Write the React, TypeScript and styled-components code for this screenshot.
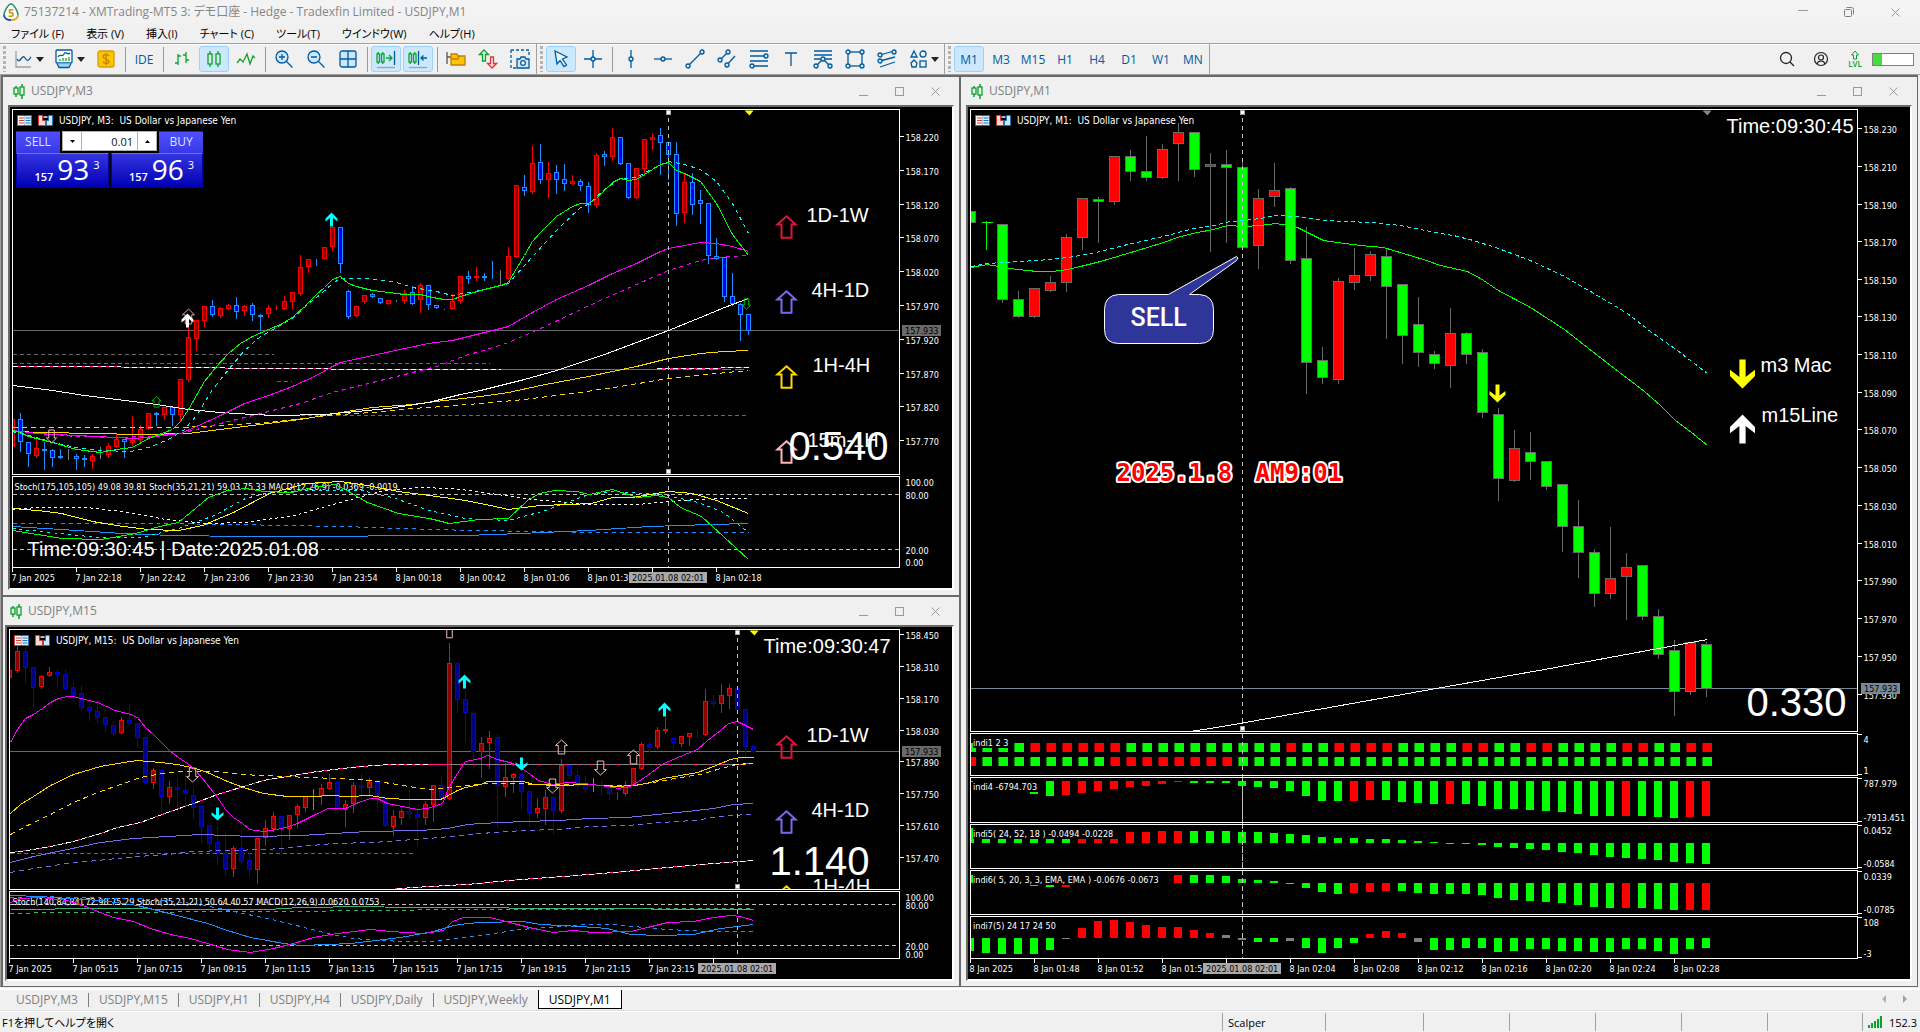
import React from "react";
import styled, { createGlobalStyle, css } from "styled-components";

const UI_FONT = `"Open Sans", "Noto Sans CJK JP", sans-serif`;
const AXIS_FONT = `"DejaVu Sans Condensed", "DejaVu Sans", sans-serif`;
const LABEL_FONT = `"Liberation Sans", Arial, sans-serif`;
const MONO_FONT = `"DejaVu Sans Mono", monospace`;

const GlobalStyle = createGlobalStyle`
  *, *::before, *::after { box-sizing: border-box; }
  body { margin: 0; background: #f0f0f0; font-family: ${UI_FONT}; font-size: 11px; color: #000; }
  button, input { font: inherit; color: inherit; }
`;

/* ---------- shell ---------- */

const Shell = styled.div`
  display: flex;
  flex-direction: column;
  min-height: 100vh;
`;

const TitleBar = styled.header`
  display: flex;
  align-items: center;
  height: 23px;
  padding: 0 2px 0 3px;
  background: #f3f3f3;
  color: #858585;
`;

const AppTitle = styled.h1`
  flex: 1;
  margin: 0 0 0 5px;
  font-size: 12px;
  font-weight: 400;
  line-height: 22px;
  white-space: nowrap;
  font-feature-settings: "palt";
`;

const PlainButton = styled.button`
  display: flex;
  align-items: center;
  justify-content: center;
  margin: 0;
  padding: 0;
  border: 0;
  background: none;
`;

const FrameButton = styled(PlainButton)`
  width: 46px;
  height: 20px;
`;

const MenuBar = styled.nav`
  display: flex;
  align-items: center;
  height: 20px;
`;

const MenuButton = styled(PlainButton)`
  height: 20px;
  padding: 0 11px 1px;
  font-size: 11px;
  white-space: nowrap;
  font-feature-settings: "palt";
`;

const ToolBar = styled.div`
  display: flex;
  align-items: center;
  height: 32px;
  border-top: 1px solid #a0a0a0;
  border-bottom: 1px solid #a0a0a0;
  box-shadow: inset 0 1px #fff;
`;

const ToolGroup = styled.div`
  display: flex;
  align-items: center;
  gap: 2px;
  height: 30px;
  padding-right: 1px;
  border-right: 1px solid #a0a0a0;
`;

const Grip = styled.i`
  width: 3px;
  height: 26px;
  margin: 0 1px 0 3px;
  background: repeating-linear-gradient(#b4b4b4 0 3px, transparent 3px 5px);
`;

const ToolButton = styled(PlainButton)<{ $on?: boolean; $wide?: boolean }>`
  width: ${(p) => (p.$wide ? 39 : 30)}px;
  height: 26px;
  gap: 4px;
  border: 1px solid transparent;
  border-radius: 3px;
  color: #005a9e;
  font-size: 12px;
  ${(p) =>
    p.$on &&
    css`
      background: #cce8ff;
      border-color: #99d1ff;
    `}
`;

const Divider = styled.i`
  width: 1px;
  height: 25px;
  margin: 0 1px 0 2px;
  background: #9a9a9a;
`;

const Caret = styled.i`
  border: 4px solid transparent;
  border-top: 5px solid #222;
  border-bottom: 0;
`;

const ToolEnd = styled.div`
  display: flex;
  align-items: center;
  margin-left: auto;
  padding-right: 6px;
`;

const EndButton = styled(PlainButton)`
  width: 34px;
  height: 26px;
  color: #222;
`;

const LevelMeter = styled.div`
  width: 42px;
  height: 13px;
  border: 1px solid #808080;
  background: linear-gradient(90deg, #44dd44 9px, #fff 9px);
`;

/* ---------- chart windows ---------- */

const Workspace = styled.main`
  display: grid;
  grid-template-columns: minmax(0, 1fr) minmax(0, 1fr);
  margin-right: 2px;
  border: 1px solid #696969;
  border-top: 0;
  border-left-color: #a0a0a0;
`;

const Column = styled.div`
  display: flex;
  flex-direction: column;
`;

const ChildFrame = styled.section<{ $left: number }>`
  padding: 0 5px 5px ${(p) => p.$left}px;
  border-top: 2px solid #696969;
  border-left: 2px solid #696969;
`;

const Caption = styled.div`
  display: flex;
  align-items: center;
  height: 28px;
  padding: 0 1px 0 5px;
  color: #808080;
`;

const CaptionTitle = styled.h2`
  flex: 1;
  margin: 0 0 0 6px;
  font-size: 12px;
  font-weight: 400;
  line-height: 26px;
`;

const CaptionButton = styled(PlainButton)`
  width: 36px;
  height: 28px;
`;

const Sunken = styled.div`
  position: relative;
  border-style: solid;
  border-width: 2px;
  border-color: #696969 #fff #fff #696969;
  background: #000;
`;

const Plot = styled.svg`
  display: block;
  width: 100%;
  font-family: ${AXIS_FONT};
  font-size: 9px;
  fill: #fff;
`;

const Symbol = styled.div`
  position: absolute;
  top: 7px;
  left: 7px;
  display: flex;
  align-items: center;
  gap: 6px;
  color: #fff;
  font-family: ${AXIS_FONT};
  font-size: 10px;
  line-height: 13px;
  white-space: pre;
`;

const TradePanel = styled.form`
  position: absolute;
  top: 24px;
  left: 6px;
  display: grid;
  grid-template-columns: 93px 92px;
  column-gap: 2px;
  width: 187px;
`;

const TradeTop = styled.div`
  display: flex;
  grid-column: 1 / -1;
  justify-content: space-between;
  height: 22px;
`;

const SideButton = styled(PlainButton)`
  width: 44px;
  height: 22px;
  padding-bottom: 2px;
  background: linear-gradient(#5050ff, #3838e4);
  color: #dfe3ff;
  font-size: 12px;
  box-shadow: inset 0 1px #2020b8;
`;

const LotBox = styled.div`
  display: flex;
  gap: 1px;
  height: 20px;
  padding: 1px;
  background: #b0b0b0;
`;

const Spin = styled(PlainButton)`
  width: 18px;
  background: #fff;
`;

const LotInput = styled.input`
  width: 55px;
  padding: 0 4px;
  border: 0;
  background: #fff;
  color: #111;
  text-align: right;
`;

const PriceButton = styled(PlainButton)`
  align-items: flex-end;
  gap: 4px;
  height: 35px;
  padding: 0 0 3px 9px;
  background: linear-gradient(#3434e0, #0000b4);
  border: 1px solid #0000a8;
  border-top-color: #6a6aff;
  color: #fff;
  line-height: 1;
`;

const PriceSmall = styled.span`
  font-size: 11px;
  font-weight: 600;
  line-height: 15px;
`;

const PriceBig = styled.span`
  font-size: 28px;
  line-height: 30px;
`;

const PriceTick = styled.span`
  align-self: flex-start;
  margin-top: 5px;
  font-size: 11px;
`;

/* ---------- bottom bars ---------- */

const TabBar = styled.div`
  display: flex;
  align-items: flex-start;
  height: 22px;
  margin-top: 1px;
  padding-left: 6px;
  border-top: 2px solid #000;
  border-image: linear-gradient(#fff 50%, #000 50%) 2;
  border-bottom: 0;
`;

const Tab = styled(PlainButton)<{ $active?: boolean }>`
  height: 19px;
  padding: 0 10px;
  color: #808080;
  font-size: 12px;
  ${(p) =>
    p.$active &&
    css`
      background: #fff;
      color: #000;
      border: 1px solid #000;
      border-top: 0;
    `}
`;

const TabRule = styled.i`
  width: 1px;
  height: 14px;
  margin-top: 3px;
  background: #808080;
`;

const TabScroll = styled.div`
  display: flex;
  gap: 14px;
  margin: 3px 11px 0 auto;
`;

const ScrollButton = styled(PlainButton)`
  width: 7px;
  height: 12px;
`;

const StatusBar = styled.footer`
  display: flex;
  align-items: center;
  height: 23px;
  border-top: 1px solid #e0e0e0;
  box-shadow: inset 0 1px #fff;
`;

const StatusHint = styled.p`
  flex: 1;
  margin: 0;
  padding-left: 2px;
  font-size: 11px;
  font-feature-settings: "palt";
`;

const StatusCell = styled.div<{ $w: number }>`
  display: flex;
  align-items: center;
  gap: 6px;
  width: ${(p) => p.$w}px;
  height: 18px;
  padding-left: 5px;
  border-left: 1px solid #a0a0a0;
  font-size: 11px;
`;

/* ---------- icons ---------- */

const Ico = ({ children, w = 20 }: { children: React.ReactNode; w?: number }) => (
  <svg width={w} height="20" viewBox={`0 0 ${w} 20`} fill="none" stroke="#005a9e" strokeWidth="1.3" aria-hidden="true">
    {children}
  </svg>
);
const GREEN = "#0aa32a";
const dot = (x: number, y: number) => <circle cx={x} cy={y} r="2" fill="#cce8ff" />;

const icons: Record<string, React.ReactNode> = {
  line: <Ico w={18}><path d="M2 2v16h15" stroke="#a0a0a0" /><path d="M3 10c3 6 5-6 8-1s4 1 6-1" /></Ico>,
  template: <Ico w={18}><rect x="1" y="1" width="16" height="13" rx="1" fill="#fff" /><path d="M2 14.500l2 4h10l2-4" fill="#9fd3f5" /><path d="M3 8c2-4 4 1 6-3s3 2 6-1" /><path d="M5 12v-2M8 12V9M11 12V9M14 12V8" stroke={GREEN} /></Ico>,
  dollar: <Ico><rect x="2" y="2" width="16" height="16" rx="2" fill="#fdc500" stroke="#d99b00" /><path d="M13 7c-1-2-6-2-6 .6S13 10 13 12.500s-5 2.500-6.200 0M10 4v12" stroke="#c47f00" /></Ico>,
  bars: <Ico><path d="M6 5v11M6 7h3M3 14h3M14 3v11M14 11h3M11 6h3" stroke={GREEN} /></Ico>,
  candles: <Ico><rect x="4" y="5" width="4" height="10" stroke={GREEN} fill="#dff5e3" /><rect x="12" y="5" width="4" height="10" stroke={GREEN} fill="#dff5e3" /><path d="M6 2v3M6 15v3M14 2v3M14 15v3" stroke={GREEN} /></Ico>,
  zig: <Ico><path d="M1 14l3-4 3 3 4-8 3 10 3-8 2 2" stroke={GREEN} /></Ico>,
  zoomIn: <Ico><circle cx="8" cy="8" r="6" fill="#cce8ff" /><path d="M12.500 12.500l6 6M5 8h6M8 5v6" /></Ico>,
  zoomOut: <Ico><circle cx="8" cy="8" r="6" fill="#cce8ff" /><path d="M12.500 12.500l6 6M5 8h6" /></Ico>,
  tile: <Ico><rect x="2" y="2" width="16" height="16" rx="2" fill="#cce8ff" /><path d="M10 2v16M2 10h16" /></Ico>,
  shift: <Ico><rect x="1" y="5" width="2.500" height="8" stroke={GREEN} /><rect x="5.500" y="5" width="2.500" height="8" stroke={GREEN} /><path d="M2.200 3v2M6.700 3v2M2.200 13v2M6.700 13v2M10 9h6M13 6l3 3-3 3" stroke={GREEN} /><path d="M18.500 2v14" /><path d="M1 18.500h18" stroke="#a0a0a0" /></Ico>,
  scroll: <Ico><rect x="1" y="5" width="2.500" height="8" stroke={GREEN} /><rect x="5.500" y="5" width="2.500" height="8" stroke={GREEN} /><path d="M2.200 3v2M6.700 3v2M2.200 13v2M6.700 13v2" stroke={GREEN} /><path d="M10.500 2v14M19 9h-6M15.500 6.500L13 9l2.500 2.500" /><path d="M1 18.500h18" stroke="#a0a0a0" /></Ico>,
  folder: <Ico><path d="M1 3v12M1 8h4" stroke="#555" /><path d="M5 5h6l1 2h7v9H5z" fill="#fdc500" stroke="#c47f00" /><path d="M5 10h7l1-3" stroke="#c47f00" /></Ico>,
  trade: <Ico><path d="M6 1l4.500 4.500H7.500V12H4.500V5.500H1.500z" stroke={GREEN} fill="#dff5e3" /><path d="M14 19l-4.500-4.500H12.500V8h3v6.500H18.500z" stroke="#d83b3b" fill="#fbdada" /></Ico>,
  camera: <Ico><path d="M1 1h18v7M1 1v18h5" strokeDasharray="3 2" /><path d="M7 10h3l1-2h4l1 2h3v9H7z" fill="#cce8ff" /><circle cx="13" cy="14" r="2.300" fill="#fff" /></Ico>,
  cursor: <Ico><path d="M4 2l12 6-4.500 2 4 6-2.500 1.500-4-6-3 3.500z" fill="#e8f5ff" /></Ico>,
  cross: <Ico><path d="M10 1v18M1 10h18" />{dot(10, 10)}</Ico>,
  vline: <Ico><path d="M10 1v18" />{dot(10, 10)}</Ico>,
  hline: <Ico><path d="M1 10h18" />{dot(10, 10)}</Ico>,
  trend: <Ico><path d="M2 18L18 2" />{dot(3, 17)}{dot(17, 3)}</Ico>,
  channel: <Ico><path d="M2 12L12 2M9 17L18 7" />{dot(3, 11)}{dot(11, 3)}{dot(10, 16)}</Ico>,
  fibo: <Ico><path d="M1 2h18M1 7h18M1 12h18M1 17h18" />{dot(17, 7)}{dot(3, 17)}</Ico>,
  text: <Ico><path d="M4 4h12M10 4v13" /></Ico>,
  fan: <Ico><path d="M1 2h18M1 6h18M1 10h7M12 10h7M2 18l8-8 8 8" />{dot(10, 10)}{dot(3, 17)}{dot(17, 17)}</Ico>,
  rect: <Ico><rect x="3" y="3" width="14" height="14" />{dot(3, 3)}{dot(17, 3)}{dot(3, 17)}{dot(17, 17)}</Ico>,
  pitch: <Ico><path d="M3 6l14-4M3 12l15-4M3 18l15-5" />{dot(3, 6)}{dot(17, 3)}{dot(3, 12)}</Ico>,
  shapes: <Ico w={18}><path d="M5 2l3 6H2z" /><circle cx="14" cy="5" r="3" /><path d="M5 11l3 3-1 4H3l-1-4z" /><rect x="11" y="12" width="6" height="6" /></Ico>,
};

const WinCandle = () => (
  <svg width="12" height="15" viewBox="0 0 12 15" fill="none" stroke={GREEN} aria-hidden="true">
    <path d="M3 2v2M3 10v3M9 0v3M9 11v4" strokeWidth="1.500" />
    <rect x="1" y="4" width="4" height="6" strokeWidth="1.300" />
    <rect x="7" y="3" width="4" height="8" strokeWidth="1.300" />
  </svg>
);

const MinIcon = ({ low = false }) => (
  <svg width="12" height="12" stroke="#9a9a9a" aria-hidden="true"><path d={low ? "M2 10.500h9" : "M1 4.500h10"} /></svg>
);
const MaxIcon = () => (
  <svg width="12" height="12" stroke="#9a9a9a" fill="none" aria-hidden="true"><rect x="2.500" y="2.500" width="8" height="8" /></svg>
);
const RestoreIcon = () => (
  <svg width="12" height="12" stroke="#808080" fill="none" aria-hidden="true"><rect x="1.500" y="3.500" width="7" height="7" rx="1" /><path d="M3.500 1.500h5q2 0 2 2v5" /></svg>
);
const CloseIcon = () => (
  <svg width="12" height="12" stroke="#9a9a9a" aria-hidden="true"><path d="M2.500 2.500l8 8M10.500 2.500l-8 8" /></svg>
);

const BookIcons = () => (
  <>
    <svg width="15" height="11" viewBox="0 0 15 11" aria-hidden="true">
      <path d="M0 0h7.500v11H0z" fill="#d93a30" /><path d="M7.500 0H15v11H7.500z" fill="#1675b8" />
      <path d="M1 1h6.500v9H1z" fill="#fff" /><path d="M7.500 1H14v9H7.500z" fill="#dcefff" />
      <path d="M2 3h5M2 5.500h5M2 8h5" stroke="#d93a30" /><path d="M8.500 3h5M8.500 5.500h5M8.500 8h5" stroke="#1675b8" />
    </svg>
    <svg width="15" height="11" viewBox="0 0 15 11" aria-hidden="true">
      <path d="M.5.5h4v5h3v5h-7z" fill="#ffd9d6" stroke="#d93a30" /><path d="M14.500.5h-4v5h-2v5h6z" fill="#cfe8ff" stroke="#1675b8" />
      <path d="M5.500 1h4v2h-4z" fill="#bbb" />
    </svg>
  </>
);

/* ---------- chart primitives ---------- */

type Tone = "r" | "b" | "g";
type Candle = [number, number, number, number, Tone];
type Palette = Record<Tone, { line: string; body: string }>;

function Candles({ data, x0, step, half, palette }: { data: Candle[]; x0: number; step: number; half: number; palette: Palette }) {
  return (
    <g shapeRendering="crispEdges">
      {data.map(([hi, top, bot, lo, tone], i) => {
        const x = x0 + i * step;
        const c = palette[tone];
        return (
          <g key={i} stroke={c.line} fill={c.body}>
            <path d={`M${x} ${hi}V${lo}`} />
            <rect x={x - half} y={top} width={half * 2} height={Math.max(bot - top - 1, 0)} />
          </g>
        );
      })}
    </g>
  );
}

const Curve = ({ c, d, dash }: { c: string; d: string; dash?: string }) => (
  <polyline points={d} fill="none" stroke={c} strokeDasharray={dash} shapeRendering="crispEdges" />
);
const Duo = ({ d }: { d: string }) => (
  <>
    <Curve c="#ff1493" d={d} />
    <Curve c="#fff" d={d} dash="5 3" />
  </>
);
const HRule = ({ x1, x2, y, c = "#696969", dash }: { x1: number; x2: number; y: number; c?: string; dash?: string }) => (
  <path d={`M${x1} ${y}H${x2}`} stroke={c} strokeDasharray={dash} shapeRendering="crispEdges" />
);
const Pane = ({ x, y, w, h }: { x: number; y: number; w: number; h: number }) => (
  <rect x={x} y={y} width={w} height={h} fill="none" stroke="#fff" shapeRendering="crispEdges" />
);

const SHAPES = {
  solid: "M12 0L24 12V18L15 11V28H9V11L0 18V12Z",
  outline: "M12 1L23 11H18V27H6V11H1Z",
};
function Arrow({ x, y, w, h, c, kind = "solid", down }: { x: number; y: number; w: number; h: number; c: string; kind?: keyof typeof SHAPES; down?: boolean }) {
  return (
    <svg x={x - w / 2} y={y} width={w} height={h} viewBox="0 0 24 28" preserveAspectRatio="none" overflow="visible">
      <path
        d={SHAPES[kind]}
        transform={down ? "matrix(1 0 0 -1 0 28)" : undefined}
        fill={kind === "solid" ? c : "none"}
        stroke={kind === "solid" ? "none" : c}
        strokeWidth={w > 14 ? 2 : 1}
        vectorEffect="non-scaling-stroke"
      />
    </svg>
  );
}

function CrossLine({ x, top, bottom, end }: { x: number; top: number; bottom: number; end: number }) {
  return (
    <g shapeRendering="crispEdges">
      <path d={`M${x} ${top}V${end}`} stroke="#c0c0c0" strokeDasharray="4 4" />
      <rect x={x - 2} y={top + 1} width="4" height="4" fill="#fff" stroke="#a0a0a0" />
      <rect x={x - 2} y={bottom - 5} width="4" height="4" fill="#fff" stroke="#a0a0a0" />
    </g>
  );
}

function PriceAxis({ x, ys, first, step, digits = 3 }: { x: number; ys: number[]; first: number; step: number; digits?: number }) {
  return (
    <>
      {ys.map((y, i) => (
        <g key={y}>
          <path d={`M${x} ${y}h4`} stroke="#fff" shapeRendering="crispEdges" />
          <text x={x + 6} y={y + 4}>{(first - i * step).toFixed(digits)}</text>
        </g>
      ))}
    </>
  );
}
const Scale = ({ x, items }: { x: number; items: [number, string][] }) => (
  <>{items.map(([y, t]) => <text key={y} x={x} y={y + 4}>{t}</text>)}</>
);
const Badge = ({ x, y, w, c, children }: { x: number; y: number; w: number; c: string; children: string }) => (
  <>
    <rect x={x} y={y} width={w} height="11" fill={c} />
    <text x={x + 3} y={y + 9} fill="#000">{children}</text>
  </>
);
function TimeAxis({ x, y, labels }: { x: number; y: number; labels: string[] }) {
  return (
    <>
      {labels.map((t, i) => (
        <g key={i}>
          <path d={`M${x + i * 64} ${y}v4`} stroke="#fff" shapeRendering="crispEdges" />
          <text x={x + i * 64 - 1} y={y + 13}>{t}</text>
        </g>
      ))}
    </>
  );
}
const Note = ({ x, y, size = 20, children }: { x: number; y: number; size?: number; children: string }) => (
  <text x={x} y={y} fontFamily={LABEL_FONT} fontSize={size}>{children}</text>
);

/* ---------- M3 ---------- */

const m3: Candle[] = [
  [319,319,347,347,"r"],[312,319,342,351,"b"],[342,342,354,366,"b"],[337,348,356,357,"r"],[341,349,351,369,"b"],[348,350,358,366,"b"],[348,356,358,358,"b"],[348,357,358,359,"g"],
  [353,356,359,369,"b"],[354,358,360,366,"b"],[353,356,361,368,"r"],[346,355,356,358,"g"],[342,346,355,357,"r"],[332,339,347,347,"r"],[338,339,342,357,"b"],[315,340,343,345,"r"],
  [324,329,340,341,"r"],[313,313,329,329,"r"],[311,313,315,325,"b"],[306,307,315,319,"r"],[307,307,315,325,"b"],[278,279,315,321,"r"],[227,237,280,281,"r"],[220,220,239,250,"r"],
  [206,206,221,226,"r"],[199,206,215,216,"b"],[206,208,216,217,"r"],[203,205,209,209,"r"],[196,205,212,218,"b"],[204,206,211,215,"r"],[202,205,215,220,"b"],[213,215,217,230,"b"],
  [204,208,214,217,"r"],[204,208,209,209,"r"],[195,201,209,209,"r"],[191,192,202,208,"r"],[154,167,194,195,"r"],[158,159,167,172,"r"],[158,160,161,165,"b"],[146,147,159,159,"r"],
  [127,127,147,150,"r"],[127,127,164,172,"b"],[189,191,217,218,"b"],[206,206,216,216,"r"],[195,195,202,203,"r"],[192,194,197,197,"b"],[198,198,203,203,"b"],[200,200,204,204,"r"],
  [199,199,200,201,"g"],[189,193,201,203,"r"],[185,192,204,204,"b"],[182,185,200,212,"r"],[185,185,205,209,"b"],[205,205,208,208,"b"],[208,208,209,209,"g"],[193,201,209,209,"r"],
  [175,176,201,203,"r"],[170,176,179,183,"b"],[166,176,178,180,"r"],[172,176,178,180,"b"],[160,177,178,178,"b"],[169,178,179,185,"g"],[146,156,179,179,"r"],[85,85,157,157,"r"],
  [74,87,91,95,"b"],[45,63,92,93,"r"],[43,62,80,83,"b"],[61,73,80,97,"r"],[64,72,80,93,"b"],[63,79,84,90,"b"],[74,81,84,84,"r"],[78,81,86,90,"b"],
  [81,86,105,112,"b"],[52,55,105,107,"r"],[50,54,57,65,"b"],[27,37,57,60,"r"],[37,37,64,64,"b"],[62,63,98,98,"b"],[67,68,98,98,"r"],[39,39,69,75,"r"],
  [32,37,40,49,"r"],[27,35,43,74,"b"],[41,42,55,79,"b"],[41,54,114,125,"b"],[73,82,113,122,"r"],[72,82,105,114,"b"],[89,100,104,123,"b"],[102,103,156,163,"b"],
  [137,156,159,159,"b"],[157,157,197,201,"b"],[172,196,204,205,"b"],[202,204,215,240,"b"],[213,214,231,234,"b"],
];

const bright: Palette = {
  r: { line: "#ff0000", body: "#8b0000" },
  b: { line: "#1e90ff", body: "#0000ff" },
  g: { line: "#808080", body: "#808080" },
};
const deep: Palette = {
  r: { line: "#ff0000", body: "#8b0000" },
  b: { line: "#0000e6", body: "#00008b" },
  g: { line: "#808080", body: "#808080" },
};

function ChartM3() {
  return (
    <Plot height="481" viewBox="10 7 942 481" preserveAspectRatio="xMinYMin meet" role="img" aria-label="USDJPY M3">
      <clipPath id="m3-main"><rect x="12" y="9" width="888" height="366" /></clipPath>
      <g transform="translate(.5 .5)">
        <g clipPath="url(#m3-main)">
          <HRule x1={12} x2={273} y={254} dash="4 3" />
          <HRule x1={12} x2={489} y={263} dash="4 3" />
          <HRule x1={276} x2={291} y={281} dash="4 3" />
          <HRule x1={300} x2={745} y={315} dash="4 3" />
          <HRule x1={12} x2={899} y={230} />
          <Candles data={m3} x0={12} step={8} half={2} palette={bright} />
          <Duo d="12,266 120,266 121,267 224,267 225,268 330,268 331,269 500,269" />
          <Curve c="#ff1493" d="500,269 656,269" />
          <HRule x1={500} x2={745} y={269} c="#8a6878" dash="9 4" />
          <Duo d="656,268 720,268 721,267 748,267" />
          <Curve c="#ffd700" dash="5 4" d="12,327 172,327 204,326 236,324 268,322 300,318 340,314 372,312 412,308 444,306 480,303 524,299 572,293 620,286 668,278 716,273 748,270" />
          <Curve c="#ffd700" d="12,331 44,332 92,333 140,334 188,333 220,329 252,325 300,319 340,312 372,307 412,304 444,300 480,296 508,292 540,285 588,276 636,266 668,258 700,253 724,251 748,250" />
          <Curve c="#fff" d="12,285 52,290 84,295 116,299 156,304 188,309 220,312 252,314 276,315 324,314 356,311 388,308 428,302 460,294 480,290 524,279 556,270 604,254 652,236 668,230 700,217 724,207 748,198" />
          <Curve c="#f0f" dash="4 4" d="12,330 36,333 76,336 116,337 148,336 180,333 204,327 236,319 268,311 300,303 332,292 364,284 404,274 436,266 468,254 480,251 508,242 540,228 572,213 604,198 636,184 668,170 700,160 716,157 748,155" />
          <Curve c="#f0f" d="12,330 36,333 76,335 116,337 132,338 148,337 180,333 196,326 220,315 244,303 268,295 292,286 316,275 332,266 340,262 372,255 404,248 428,243 452,240 480,233 508,226 532,212 556,199 588,185 612,173 636,163 660,151 668,148 684,145 700,142 716,143 732,146 748,151" />
          <Curve c="#0ff" dash="4 4" d="12,331 36,337 52,342 80,348 100,350 130,351 148,347 168,339 184,329 196,315 212,289 228,269 244,250 260,236 276,227 292,218 308,203 320,194 332,183 340,178 364,178 396,182 412,187 436,191 452,195 468,192 480,190 508,183 532,156 556,130 580,107 588,104 604,89 620,78 636,77 652,68 668,61 684,64 700,69 716,81 732,103 748,133" />
          <Curve c="#0f0" d="12,330 20,332 28,336 52,342 76,349 100,352 116,349 132,347 148,338 164,332 172,329 180,321 188,309 196,295 204,281 216,266 228,253 240,243 252,236 268,229 280,224 292,217 304,206 316,194 324,187 332,179 340,176 348,183 356,186 372,190 388,192 404,194 420,194 432,197 444,199 452,199 460,196 480,190 500,185 508,182 516,168 524,155 532,141 540,132 556,116 572,106 580,103 588,103 596,98 612,82 620,78 628,80 636,79 644,74 660,64 668,62 676,70 684,73 700,81 716,103 732,134 748,155" />
          <Arrow x={331} y={112} w={12} h={14} c="#0ff" />
          <Arrow x={188} y={208} w={13} h={16} c="#d8a8a0" kind="outline" />
          <Arrow x={187} y={213} w={12} h={14} c="#fff" />
          <Arrow x={156} y={296} w={10} h={11} c="#00b000" kind="outline" />
          <Arrow x={51} y={329} w={11} h={14} c="#e9bdb6" kind="outline" down />
          <Arrow x={746} y={198} w={9} h={11} c="#00c800" kind="outline" down />
          <Arrow x={786} y={115} w={20} h={23} c="#dc143c" kind="outline" />
          <Arrow x={786} y={190} w={20} h={23} c="#7b68ee" kind="outline" />
          <Arrow x={786} y={265} w={20} h={23} c="#ffd700" kind="outline" />
          <Arrow x={786} y={340} w={20} h={23} c="#ffb6b6" kind="outline" />
          <Note x={806} y={121}>1D-1W</Note>
          <Note x={811} y={196}>4H-1D</Note>
          <Note x={812} y={271}>1H-4H</Note>
          <Note x={807} y={346}>15m-1H</Note>
          <Note x={788} y={359} size={40}>0.540</Note>
        </g>
        <HRule x1={12} x2={899} y={394} c="#c0c0c0" dash="4 3" />
        <HRule x1={12} x2={899} y={449} c="#c0c0c0" dash="4 3" />
        <text x="14" y="389">Stoch(175,105,105) 49.08 39.81 Stoch(35,21,21) 59.03 75.33 MACD(12,26,9) -0.0369 -0.0019</text>
        <Curve c="#1e90ff" dash="4 4" d="12,423 159,423 233,424 343,426 429,429 527,431 612,432 748,432" />
        <Curve c="#1e90ff" d="12,426 61,429 122,433 171,435 245,436 343,436 392,435 465,435 520,433 588,430 649,426 710,424 748,423" />
        <Curve c="#fff" dash="3 3" d="12,409 37,407 86,407 129,412 165,419 208,423 245,422 294,415 343,401 380,391 416,387 453,388 490,393 533,399 588,404 637,404 680,400 716,398 748,398" />
        <Curve c="#0ff" dash="3 4" d="12,428 49,432 98,437 141,437 178,428 214,415 245,398 269,392 306,390 361,390 392,397 429,410 465,418 508,420 545,410 588,394 612,391 643,393 667,395 698,402 723,412 748,432" />
        <Curve c="#ff0" d="12,408 37,410 61,413 92,421 116,425 147,429 178,430 202,425 233,412 269,393 306,383 340,381 367,385 398,391 429,395 465,400 490,405 508,409 539,405 569,404 591,403 612,397 631,397 668,391 692,393 716,400 748,413" />
        <Curve c="#0f0" d="12,430 37,434 61,438 101,439 135,433 159,426 178,422 190,412 208,397 227,390 245,388 263,391 291,392 312,387 334,384 343,388 367,402 398,413 429,418 449,423 478,419 508,418 527,400 539,393 554,390 576,391 589,394 612,389 637,397 655,395 668,397 680,407 701,416 723,436 748,459" />
        <Note x={27} y={455}>Time:09:30:45 | Date:2025.01.08</Note>
        <CrossLine x={668} top={9} bottom={374} end={467} />
        <Pane x={12} y={9} w={887} h={365} />
        <Pane x={12} y={376} w={887} h={91} />
        <path d="M744 10h9l-4 5z" fill="#ff0" />
        <PriceAxis x={899} ys={[36, 70, 104, 137, 171, 205, 239, 273, 306, 340]} first={158.22} step={0.05} />
        <Scale x={905} items={[[381, "100.00"], [394, "80.00"], [449, "20.00"], [461, "0.00"]]} />
        <TimeAxis x={12} y={467} labels={["7 Jan 2025", "7 Jan 22:18", "7 Jan 22:42", "7 Jan 23:06", "7 Jan 23:30", "7 Jan 23:54", "8 Jan 00:18", "8 Jan 00:42", "8 Jan 01:06", "8 Jan 01:30", "", "8 Jan 02:18"]} />
      </g>
      <Badge x={902} y={225} w={39} c="#696969">157.933</Badge>
      <Badge x={629} y={472} w={78} c="#a9a9a9">2025.01.08 02:01</Badge>
    </Plot>
  );
}

/* ---------- M15 ---------- */

const m15: Candle[] = [
  [75,75,83,83,"r"],[50,56,76,77,"r"],[52,56,73,88,"b"],[71,72,93,113,"b"],[79,81,92,93,"r"],[71,77,81,81,"r"],[73,77,80,91,"b"],[73,79,94,95,"b"],
  [86,92,100,105,"b"],[89,98,113,115,"b"],[108,112,116,125,"b"],[108,116,123,128,"b"],[120,122,130,136,"b"],[125,130,139,140,"b"],[121,125,138,138,"r"],[108,125,129,130,"b"],
  [128,128,143,152,"b"],[140,142,188,189,"b"],[172,175,188,193,"r"],[175,175,202,217,"b"],[185,192,202,208,"r"],[182,192,195,217,"b"],[178,195,199,210,"b"],[191,200,213,224,"b"],
  [211,211,232,247,"b"],[230,230,249,256,"b"],[229,247,258,269,"b"],[235,258,274,280,"b"],[250,253,274,281,"r"],[234,253,267,268,"b"],[256,265,275,281,"b"],[242,243,275,288,"r"],
  [224,233,243,250,"r"],[216,221,234,236,"r"],[221,221,234,258,"b"],[219,220,234,244,"r"],[208,211,220,232,"r"],[200,201,213,216,"r"],[193,201,202,214,"g"],[188,193,201,209,"r"],
  [178,187,194,194,"r"],[185,187,215,217,"b"],[204,209,215,231,"r"],[186,190,209,217,"r"],[177,190,193,204,"b"],[182,187,193,200,"r"],[183,187,203,213,"b"],[203,203,231,231,"b"],
  [214,221,232,240,"r"],[213,216,223,229,"r"],[193,216,219,223,"b"],[212,219,223,251,"b"],[205,209,223,229,"r"],[190,190,210,226,"r"],[181,190,203,211,"b"],[47,68,204,204,"r"],
  [66,68,105,117,"b"],[95,104,118,146,"b"],[115,118,157,173,"b"],[141,148,157,182,"r"],[135,143,148,173,"r"],[138,142,191,232,"b"],[167,182,192,201,"r"],[177,179,183,197,"r"],
  [179,179,197,214,"b"],[196,196,218,231,"b"],[202,213,218,222,"r"],[194,202,214,229,"r"],[202,202,216,239,"b"],[163,170,216,217,"r"],[168,171,181,183,"b"],[174,180,191,195,"b"],
  [180,190,195,197,"b"],[182,194,195,196,"g"],[184,194,195,200,"b"],[194,194,199,204,"b"],[196,199,200,204,"r"],[185,190,199,200,"r"],[173,173,190,190,"r"],[146,149,174,174,"r"],
  [145,149,153,157,"b"],[131,135,152,153,"r"],[122,134,136,138,"r"],[143,143,148,153,"b"],[140,141,149,151,"r"],[138,138,142,150,"r"],[133,138,139,142,"b"],[93,106,140,140,"r"],
  [99,106,109,112,"b"],[88,100,109,117,"r"],[88,93,101,113,"r"],[93,93,115,117,"b"],[113,114,152,161,"b"],[151,151,157,157,"b"],
];

function ChartM15() {
  return (
    <Plot height="352" viewBox="7 32 945 352" preserveAspectRatio="xMinYMin meet" role="img" aria-label="USDJPY M15">
      <clipPath id="m15-main"><rect x="9" y="34" width="891" height="260" /></clipPath>
      <g transform="translate(.5 .5)">
        <g clipPath="url(#m15-main)">
          <HRule x1={9} x2={899} y={156} />
          <HRule x1={9} x2={414} y={258} dash="4 3" />
          <Candles data={m15} x0={9} step={8} half={2} palette={deep} />
          <Duo d="10,257 27,255 50,251 73,246 100,238 117,232 140,227 167,217 193,208 217,199 240,192 263,185 287,181 310,177 333,174 360,171 390,169 413,169 430,169" />
          <Curve c="#ff1493" d="430,169 735,169" />
          <HRule x1={449} x2={745} y={169} c="#808080" dash="10 3" />
          <Duo d="733,169 753,168" />
          <Duo d="389,294 413,292 447,290 480,288 487,287 520,284 563,281 613,277 667,272 713,268 753,265" />
          <Curve c="#7b68ee" dash="5 4" d="10,277 40,272 67,268 107,264 137,261 167,259 193,256 227,255 267,254 300,251 333,248 373,247 413,244 440,242 480,238 523,235 557,234 590,231 627,230 660,227 693,225 727,220 753,219" />
          <Curve c="#7b68ee" d="10,267 33,261 67,254 100,247 133,243 167,241 200,239 253,241 300,240 333,238 367,236 420,235 447,233 467,229 480,228 523,226 557,225 590,223 627,222 657,219 687,216 713,213 733,209 753,208" />
          <Curve c="#ffd700" dash="5 4" d="10,239 27,230 50,219 73,207 100,196 120,189 140,182 162,178 183,176 213,176 233,178 257,180 287,181 307,182 337,183 360,184 377,186 397,189 420,193 433,194 450,192 467,190 487,188 560,189 633,190 653,187 680,182 700,179 720,173 737,169 753,168" />
          <Curve c="#ffd700" d="10,218 20,209 33,201 50,190 73,179 100,171 117,168 137,165 160,167 177,169 195,173 207,177 227,186 243,192 263,198 287,201 313,201 330,200 347,201 370,200 387,203 410,204 440,204 448,200 457,195 465,192 480,189 487,186 523,186 533,189 557,190 590,189 613,191 635,190 650,187 663,183 697,177 713,171 730,164 740,162 753,162" />
          <Curve c="#f0f" d="10,147 17,134 25,123 33,119 42,113 50,107 58,103 67,101 73,101 80,103 97,107 115,115 130,119 137,122 145,132 153,139 162,148 170,156 178,162 187,168 195,175 202,183 210,193 217,202 225,214 233,222 242,228 249,234 263,236 277,234 288,231 297,228 313,220 328,213 345,213 358,207 370,203 377,203 387,208 402,211 417,214 427,213 433,211 442,208 448,193 457,178 465,166 480,163 487,160 497,164 505,166 513,168 521,173 530,179 538,185 552,189 567,187 583,188 600,190 612,192 618,193 630,191 638,186 647,180 663,168 673,164 687,158 697,154 707,145 720,135 728,128 737,126 743,129 753,134" />
          <Arrow x={449} y={24} w={11} h={19} c="#e9bdb6" kind="outline" />
          <Arrow x={464} y={79} w={12} h={14} c="#0ff" />
          <Arrow x={217} y={212} w={12} h={13} c="#0ff" down />
          <Arrow x={192} y={172} w={13} h={15} c="#e9bdb6" kind="outline" down />
          <Arrow x={561} y={144} w={13} h={15} c="#e9bdb6" kind="outline" />
          <Arrow x={521} y={162} w={12} h={13} c="#0ff" down />
          <Arrow x={552} y={183} w={13} h={15} c="#e9bdb6" kind="outline" down />
          <Arrow x={600} y={165} w={13} h={15} c="#e9bdb6" kind="outline" down />
          <Arrow x={633} y={154} w={13} h={15} c="#e9bdb6" kind="outline" />
          <Arrow x={664} y={107} w={12} h={14} c="#0ff" />
          <Arrow x={786} y={140} w={20} h={23} c="#dc143c" kind="outline" />
          <Arrow x={786} y={215} w={20} h={23} c="#7b68ee" kind="outline" />
          <Arrow x={786} y={290} w={20} h={23} c="#ffd700" kind="outline" />
          <Note x={763} y={57}>Time:09:30:47</Note>
          <Note x={806} y={146}>1D-1W</Note>
          <Note x={811} y={221}>4H-1D</Note>
          <Note x={812} y={297}>1H-4H</Note>
          <Note x={769} y={279} size={40}>1.140</Note>
        </g>
        <HRule x1={9} x2={899} y={309} c="#c0c0c0" dash="4 3" />
        <HRule x1={9} x2={899} y={350} c="#c0c0c0" dash="4 3" />
        <text x="12" y="309">Stoch(140,84,84) 72.98 75.29 Stoch(35,21,21) 50.64 40.57 MACD(12,26,9) 0.0620 0.0753</text>
        <Curve c="#3cb371" dash="4 4" d="10,318 53,317 150,317 207,316 300,316 353,315 480,314 753,313" />
        <Curve c="#3cb371" d="10,314 43,314 67,313 133,313 167,314 267,314 300,312 367,311 400,312 613,313 687,314 753,314" />
        <Curve c="#1e90ff" dash="4 4" d="10,302 40,301 67,302 133,303 167,305 200,309 233,316 267,323 300,331 327,338 353,343 377,345 407,346 433,346 457,343 480,340 500,337 520,334 547,332 587,329 613,329 633,331 667,334 707,336 753,336" />
        <Curve c="#1e90ff" d="10,300 40,301 67,303 100,305 137,310 157,315 173,319 207,328 227,335 250,342 267,345 283,348 300,350 327,349 350,348 367,346 400,342 433,336 453,330 467,328 480,327 523,326 540,329 580,331 607,333 630,339 660,340 693,339 720,333 753,329" />
        <Curve c="#f0f" d="10,307 20,303 40,302 67,305 80,309 100,317 113,322 133,326 150,333 170,339 190,343 207,348 227,354 250,357 273,353 293,348 313,342 330,339 353,336 370,334 390,336 423,338 443,335 452,326 463,322 490,322 513,328 533,333 553,337 573,335 593,337 630,336 647,332 667,327 693,326 713,322 730,320 740,321 753,325" />
        <CrossLine x={737} top={34} bottom={294} end={363} />
        <Pane x={9} y={34} w={890} h={260} />
        <Pane x={9} y={296} w={890} h={67} />
        <path d="M749 35h9l-4 5z" fill="#ff0" />
        <PriceAxis x={899} ys={[39, 71, 103, 135, 166, 198, 230, 262]} first={158.45} step={0.14} />
        <Scale x={905} items={[[301, "100.00"], [309, "80.00"], [350, "20.00"], [358, "0.00"]]} />
        <TimeAxis x={9} y={363} labels={["7 Jan 2025", "7 Jan 05:15", "7 Jan 07:15", "7 Jan 09:15", "7 Jan 11:15", "7 Jan 13:15", "7 Jan 15:15", "7 Jan 17:15", "7 Jan 19:15", "7 Jan 21:15", "7 Jan 23:15", ""]} />
      </g>
      <Badge x={902} y={151} w={39} c="#696969">157.933</Badge>
      <Badge x={698} y={368} w={78} c="#a9a9a9">2025.01.08 02:01</Badge>
    </Plot>
  );
}

/* ---------- M1 ---------- */

const m1: Candle[] = [
  [111,111,123,123,"g"],[120,122,123,149,"g"],[124,124,200,202,"g"],[190,199,217,217,"g"],[188,188,217,217,"r"],[175,182,191,191,"r"],[133,137,183,191,"r"],[98,98,138,149,"r"],
  [96,99,102,142,"g"],[56,56,102,104,"r"],[49,56,72,80,"g"],[35,71,78,80,"g"],[43,49,78,78,"r"],[22,32,44,80,"r"],[32,32,70,76,"g"],[52,64,67,151,"r"],
  [49,64,68,142,"g"],[57,67,148,148,"g"],[88,98,146,168,"r"],[62,90,97,106,"r"],[86,88,161,163,"g"],[126,158,263,293,"g"],[246,260,278,283,"g"],[177,181,280,283,"r"],
  [147,175,183,189,"r"],[150,154,176,180,"r"],[148,156,187,238,"g"],[184,184,236,263,"g"],[196,224,253,266,"g"],[250,254,264,268,"g"],[207,233,266,287,"r"],[231,233,255,263,"g"],
  [248,252,313,317,"g"],[307,314,379,400,"g"],[329,348,381,381,"r"],[331,352,362,379,"g"],[360,361,387,389,"g"],[384,384,427,451,"g"],[399,426,453,477,"g"],[448,452,494,506,"g"],
  [426,478,494,498,"r"],[452,467,477,519,"r"],[465,465,517,519,"g"],[508,516,555,558,"g"],[539,550,592,615,"g"],[542,542,592,594,"r"],[541,544,589,596,"g"],
];
const block: Palette = {
  r: { line: "#696969", body: "#ff0000" },
  b: { line: "#696969", body: "#808080" },
  g: { line: "#696969", body: "#00ff00" },
};

const LIME = "#00ff00";
const RED = "#ff0000";
const toneFill: Record<string, string> = { g: LIME, r: RED, n: "#808080" };

const row1 = "ggggrrrrrrggggggggggrggrrrrggggrrggrrggggrrggrr";
const row2 = "r" + "g".repeat(8) + "r".repeat(8) + "g".repeat(30);

const indi4 = [-1,0,0,0,-13,-15,-14,-12,-10,-8,-6,-5,-3,-1,-2,-2,-2,-5,-6,-7,-10,-15,-20,-20,-20,-19,-19,-21,-22,-23,-23,-23,-25,-28,-28,-29,-30,-31,-33,-35,-35,-35,-35,-36,-37,-36,-35];
const tone4 = "ggggggrrrrrrrrggggggggggrrggggrggggggggggrgggrr";
const indi5 = [15,4,4,4,4,4,4,4,4,4,11,11,12,12,12,12,12,11,11,10,9,8,6,5,5,4,4,3,2,1,-1,-1,-2,-4,-5,-6,-7,-9,-10,-12,-14,-15,-16,-17,-19,-20,-21];
const tone5 = "gggggggrrrrrrr" + "g".repeat(33);
const indi6 = [8,0,0,0,-3,-4,-4,0,0,0,0,0,0,8,8,8,7,4,3,2,-1,-5,-9,-11,-10,-9,-8,-8,-10,-11,-11,-11,-12,-15,-17,-18,-19,-20,-22,-24,-25,-25,-25,-26,-27,-27,-27];
const tone6 = "ggggggrrrrrrrrggggggggggrrrggggggggggggggrgggrr";
const indi7 = [-13,-15,-16,-16,-16,-12,-1,10,17,18,16,13,11,11,8,5,3,-2,-4,-4,-3,-10,-15,-10,-5,4,7,5,-4,-12,-12,-10,-10,-14,-13,-11,-11,-13,-13,-14,-14,-11,-11,-13,-16,-11,-10];
const tone7 = "ggggggnrrrrrrrrrnnggnggggrrrnggggggggggggggggggg";

const Squares = ({ tones, y }: { tones: string; y: number }) => (
  <>
    {tones.split("").map((t, i) => (
      <g key={i}>
        <rect x={6 + i * 16} y={y} width="10" height="9" fill={toneFill[t]} />
        <rect x={6 + i * 16} y={y} width="1" height="9" fill={t === "g" ? "#009000" : "#900000"} />
      </g>
    ))}
  </>
);
const Histogram = ({ data, tones, base }: { data: number[]; tones: string; base: number }) => (
  <>
    {data.map((v, i) => (
      <rect key={i} x={6 + i * 16} y={v > 0 ? base - v : base} width="8" height={Math.abs(v)} fill={toneFill[tones[i]]} />
    ))}
  </>
);
const IndiTitle = ({ y, w, children }: { y: number; w: number; children: string }) => (
  <>
    <rect x="13" y={y - 8} width={w} height="13" fill="#000" />
    <text x="13" y={y + 3}>{children}</text>
  </>
);

function ChartM1() {
  return (
    <Plot height="872" viewBox="8 7 942 872" preserveAspectRatio="xMinYMin meet" role="img" aria-label="USDJPY M1">
      <clipPath id="m1-main"><rect x="10" y="9" width="888" height="622" /></clipPath>
      <clipPath id="m1-sub"><rect x="11" y="0" width="886" height="250" /></clipPath>
      <g transform="translate(.5 .5)">
        <g clipPath="url(#m1-main)">
          <HRule x1={10} x2={897} y={588} c="#778899" />
          <Candles data={m1} x0={10} step={16} half={5} palette={block} />
          <path d="M26 120v29M21 122h11" stroke={LIME} shapeRendering="crispEdges" />
          <Curve c="#0f0" d="11,167 27,164 38,166 57,169 77,171 92,171 107,169 120,166 140,161 167,153 187,147 203,142 220,136 237,132 253,129 267,125 283,126 300,125 315,123 330,125 337,127 353,135 363,140 377,142 400,145 423,147 443,153 463,159 480,165 507,171 520,178 538,190 570,207 604,229 637,255 667,278 684,291 700,305 715,320 731,332 747,345" />
          <Curve c="#0ff" dash="4 3" d="11,166 27,163 43,162 60,161 90,159 107,157 120,155 140,151 167,144 203,136 233,128 253,125 270,121 283,120 300,118 315,115 335,116 350,118 363,120 387,121 410,122 440,125 460,129 480,133 493,135 513,140 538,148 570,160 604,176 637,195 667,213 690,231 717,250 747,273" />
          <Curve c="#fff" d="222,632 250,628 268,625 470,589 584,569 747,539" />
          <Arrow x={537} y={284} w={16} h={18} c="#ff0" down />
          <Arrow x={782} y={259} w={25} h={29} c="#ff0" down />
          <Arrow x={782} y={314} w={25} h={29} c="#fff" />
          <Note x={766} y={32}>Time:09:30:45</Note>
          <Note x={800} y={271}>m3 Mac</Note>
          <Note x={801} y={321}>m15Line</Note>
          <Note x={786} y={615} size={40}>0.330</Note>
        </g>
        <CrossLine x={282} top={9} bottom={631} end={857} />
        <path d="M158 194H208L276 156Q279 157 276 160L229 194H239Q253 195 253 209V229Q253 243 239 243H158Q144 243 144 229V209Q144 195 158 194Z" fill="#2e3699" stroke="#fff" />
        <text x="170" y="225" fontFamily="Roboto, sans-serif" fontSize="25" fontWeight="500">SELL</text>
        <g fontFamily={MONO_FONT} fontSize="24" fontWeight="700" fill="#ff0000" stroke="#fff" strokeWidth="4" strokeLinejoin="round" paintOrder="stroke">
          <text x="156" y="380">2025.1.8</text>
          <text x="295" y="380">AM9:01</text>
        </g>
        <Pane x={10} y={9} w={887} h={622} />
        <path d="M742 10h9l-4 5z" fill="#778899" />
        <PriceAxis x={897} ys={[28, 66, 104, 141, 179, 216, 254, 292, 329, 367, 405, 443, 480, 518, 556, 594]} first={158.23} step={0.02} />
      </g>
      <g transform="translate(0 625)">
        <g clipPath="url(#m1-sub)" shapeRendering="crispEdges">
          <Squares tones={row1} y={18} />
          <Squares tones={row2} y={32} />
          <Histogram data={indi4} tones={tone4} base={56} />
          <Histogram data={indi5} tones={tone5} base={118} />
          <Histogram data={indi6} tones={tone6} base={158} />
          <Histogram data={indi7} tones={tone7} base={213} />
        </g>
        <IndiTitle y={18} w={38}>indi1 2 3</IndiTitle>
        <IndiTitle y={62} w={66}>indi4 -6794.703</IndiTitle>
        <IndiTitle y={109} w={143}>indi5( 24, 52, 18 ) -0.0494 -0.0228</IndiTitle>
        <IndiTitle y={155} w={198}>indi6( 5, 20, 3, 3, EMA, EMA ) -0.0676 -0.0673</IndiTitle>
        <IndiTitle y={201} w={84}>indi7(5) 24 17 24 50</IndiTitle>
      </g>
      <g transform="translate(.5 625.5)">
        {[[8, 42], [52, 45], [99, 44], [145, 44], [191, 42]].map(([y, h]) => (
          <g key={y}>
            <path d={`M282 ${y}v${h}`} stroke="#c0c0c0" strokeDasharray="4 4" shapeRendering="crispEdges" />
            <Pane x={10} y={y} w={887} h={h} />
            <path d={`M897 ${y + 1}h4M897 ${y + h - 1}h4`} stroke="#fff" shapeRendering="crispEdges" />
          </g>
        ))}
        <Scale x={903} items={[[13, "4"], [44, "1"], [57, "787.979"], [91, "-7913.451"], [104, "0.0452"], [137, "-0.0584"], [150, "0.0339"], [183, "-0.0785"], [196, "108"], [227, "-3"]]} />
        <TimeAxis x={10} y={233} labels={["8 Jan 2025", "8 Jan 01:48", "8 Jan 01:52", "8 Jan 01:56", "", "8 Jan 02:04", "8 Jan 02:08", "8 Jan 02:12", "8 Jan 02:16", "8 Jan 02:20", "8 Jan 02:24", "8 Jan 02:28"]} />
      </g>
      <Badge x={901} y={583} w={39} c="#778899">157.933</Badge>
      <Badge x={243} y={863} w={78} c="#a9a9a9">2025.01.08 02:01</Badge>
    </Plot>
  );
}

/* ---------- windows ---------- */

function ChildWindow({ name, left, heading, children }: { name: string; left: number; heading: string; children: React.ReactNode }) {
  return (
    <ChildFrame $left={left}>
      <Caption>
        <WinCandle />
        <CaptionTitle>{name}</CaptionTitle>
        <CaptionButton aria-label="Minimize"><MinIcon low /></CaptionButton>
        <CaptionButton aria-label="Maximize"><MaxIcon /></CaptionButton>
        <CaptionButton aria-label="Close"><CloseIcon /></CaptionButton>
      </Caption>
      <Sunken>
        {children}
        <Symbol><BookIcons />{heading}</Symbol>
      </Sunken>
    </ChildFrame>
  );
}

const Quick = () => (
  <TradePanel onSubmit={(e) => e.preventDefault()}>
    <TradeTop>
      <SideButton type="button">SELL</SideButton>
      <LotBox>
        <Spin type="button" aria-label="Less"><svg width="5" height="3"><path d="M0 0h5L2.500 3z" /></svg></Spin>
        <LotInput aria-label="Volume" defaultValue="0.01" />
        <Spin type="button" aria-label="More"><svg width="5" height="3"><path d="M0 3h5L2.500 0z" /></svg></Spin>
      </LotBox>
      <SideButton type="button">BUY</SideButton>
    </TradeTop>
    {["93", "96"].map((p) => (
      <PriceButton key={p} type="button">
        <PriceSmall>157</PriceSmall>
        <PriceBig>{p}</PriceBig>
        <PriceTick>3</PriceTick>
      </PriceButton>
    ))}
  </TradePanel>
);

const menus = ["ファイル (F)", "表示 (V)", "挿入(I)", "チャート (C)", "ツール(T)", "ウインドウ(W)", "ヘルプ(H)"];
const frames = ["M1", "M3", "M15", "H1", "H4", "D1", "W1", "MN"];
const tabs = ["USDJPY,M3", "USDJPY,M15", "USDJPY,H1", "USDJPY,H4", "USDJPY,Daily", "USDJPY,Weekly"];

const Tool = ({ id, on }: { id: string; on?: boolean }) => (
  <ToolButton $on={on} aria-label={id}>{icons[id]}</ToolButton>
);
const DropTool = ({ id }: { id: string }) => (
  <ToolButton $wide aria-label={id}>{icons[id]}<Caret /></ToolButton>
);

export default function App() {
  return (
    <Shell>
      <GlobalStyle />
      <TitleBar>
        <svg width="16" height="18" viewBox="0 0 16 18" aria-hidden="true">
          <path d="M8 1C5 1 1 9 1 12c0 3 3 5 7 5s7-2 7-5c0-3-4-11-7-11z" fill="#fff" stroke="#2b8a6e" strokeWidth="1.500" />
          <path d="M1 12c0 3 3 5 7 5" fill="none" stroke="#1d5fa8" strokeWidth="2" />
          <path d="M15 12c0 3-3 5-7 5" fill="none" stroke="#e0b01c" strokeWidth="2" />
          <text x="5" y="14" fontSize="11" fontWeight="700" fill="#c8960c">5</text>
        </svg>
        <AppTitle>75137214 - XMTrading-MT5 3: デモ口座 - Hedge - Tradexfin Limited - USDJPY,M1</AppTitle>
        <FrameButton aria-label="Minimize"><MinIcon /></FrameButton>
        <FrameButton aria-label="Restore"><RestoreIcon /></FrameButton>
        <FrameButton aria-label="Close"><CloseIcon /></FrameButton>
      </TitleBar>
      <MenuBar>
        {menus.map((m) => <MenuButton key={m}>{m}</MenuButton>)}
      </MenuBar>
      <ToolBar>
        <ToolGroup>
          <Grip />
          <DropTool id="line" />
          <DropTool id="template" />
          <Tool id="dollar" />
          <Divider />
          <ToolButton>IDE</ToolButton>
          <Divider />
          <Tool id="bars" />
          <Tool id="candles" on />
          <Tool id="zig" />
          <Divider />
          <Tool id="zoomIn" />
          <Tool id="zoomOut" />
          <Tool id="tile" />
          <Divider />
          <Tool id="shift" on />
          <Tool id="scroll" on />
          <Divider />
          <Tool id="folder" />
          <Tool id="trade" />
          <Tool id="camera" />
        </ToolGroup>
        <ToolGroup>
          <Grip />
          <Tool id="cursor" on />
          <Tool id="cross" />
          <Divider />
          {["vline", "hline", "trend", "channel", "fibo", "text", "fan", "rect", "pitch"].map((id) => <Tool key={id} id={id} />)}
          <DropTool id="shapes" />
        </ToolGroup>
        <ToolGroup>
          <Grip />
          {frames.map((f) => <ToolButton key={f} $on={f === "M1"}>{f}</ToolButton>)}
        </ToolGroup>
        <ToolEnd>
          <EndButton aria-label="Search">
            <svg width="16" height="16" fill="none" stroke="#222" strokeWidth="1.300"><circle cx="7" cy="7" r="5.500" /><path d="M11 11l4 4" /></svg>
          </EndButton>
          <EndButton aria-label="Account">
            <svg width="16" height="16" fill="none" stroke="#222" strokeWidth="1.200"><circle cx="8" cy="8" r="6.500" /><circle cx="8" cy="6.500" r="2.500" /><path d="M4 13c1-4 7-4 8 0" /></svg>
          </EndButton>
          <EndButton aria-label="Level">
            <svg width="16" height="18" fill="none" stroke={GREEN}><path d="M8 1l3.500 4H9.500v4h-3V5H4.500z" /><text x="8" y="17" textAnchor="middle" fontSize="8" fontWeight="600" fill={GREEN} stroke="none">LVL</text></svg>
          </EndButton>
          <LevelMeter role="meter" aria-label="Level" aria-valuenow={22} />
        </ToolEnd>
      </ToolBar>
      <Workspace>
        <Column>
          <ChildWindow name="USDJPY,M3" left={5} heading="USDJPY, M3:  US Dollar vs Japanese Yen">
            <ChartM3 />
            <Quick />
          </ChildWindow>
          <ChildWindow name="USDJPY,M15" left={2} heading="USDJPY, M15:  US Dollar vs Japanese Yen">
            <ChartM15 />
          </ChildWindow>
        </Column>
        <Column>
          <ChildWindow name="USDJPY,M1" left={5} heading="USDJPY, M1:  US Dollar vs Japanese Yen">
            <ChartM1 />
          </ChildWindow>
        </Column>
      </Workspace>
      <TabBar>
        {tabs.map((t, i) => (
          <React.Fragment key={t}>
            {i > 0 && <TabRule />}
            <Tab>{t}</Tab>
          </React.Fragment>
        ))}
        <Tab $active>USDJPY,M1</Tab>
        <TabScroll>
          <ScrollButton aria-label="Previous"><svg width="5" height="8"><path d="M4 0v8L0 4z" fill="#b0b0b0" /></svg></ScrollButton>
          <ScrollButton aria-label="Next"><svg width="5" height="8"><path d="M0 0v8l4-4z" fill="#a0a0a0" /></svg></ScrollButton>
        </TabScroll>
      </TabBar>
      <StatusBar>
        <StatusHint>F1を押してヘルプを開く</StatusHint>
        <StatusCell $w={103}>Scalper</StatusCell>
        <StatusCell $w={98} />
        <StatusCell $w={86} />
        <StatusCell $w={86} />
        <StatusCell $w={86} />
        <StatusCell $w={86} />
        <StatusCell $w={95} />
        <StatusCell $w={58}>
          <svg width="15" height="12" fill={GREEN}><path d="M0 9h2v3H0zM3 7h2v5H3zM6 5h2v7H6zM9 3h2v9H9zM12 0h2v12h-2z" /></svg>
          152.3
        </StatusCell>
      </StatusBar>
    </Shell>
  );
}
